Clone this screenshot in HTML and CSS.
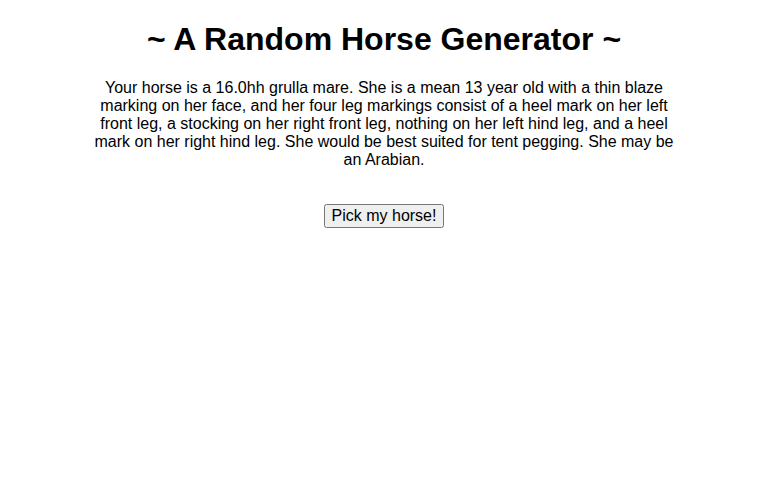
FILE: index.html
```html
<!DOCTYPE html>
<html lang="en">
<head>
    <meta charset="UTF-8">
    <meta name="viewport" content="width=device-width, initial-scale=1.0">
    <title>A Random Horse Generator</title>
    <link rel="stylesheet" href="styles.css">
</head>
<body>

<h1>~ A Random Horse Generator ~</h1>

<p class="horse" id="horseText">Your horse is a 16.0hh grulla mare. She is a mean 13 year old with a thin blaze marking on her face, and her four leg markings consist of a heel mark on her left front leg, a stocking on her right front leg, nothing on her left hind leg, and a heel mark on her right hind leg. She would be best suited for tent pegging. She may be an Arabian.</p>

<div class="actions">
    <button id="pickButton">Pick my horse!</button>
</div>

</body>
</html>
```

FILE: styles.css
```css
body {
    font-family: "Liberation Sans", Arial, sans-serif;
    text-align: center;
    color: #000000;
    background-color: #ffffff;
    margin: 0 8px;
}

h1 {
    font-size: 32px;
    margin: 21px 0;
}

.horse {
    width: 600px;
    margin: 16px auto;
    font-size: 16px;
}

.actions {
    margin-top: 35px;
}

button {
    font-family: "Liberation Sans", Arial, sans-serif;
    font-size: 16px;
}
```
